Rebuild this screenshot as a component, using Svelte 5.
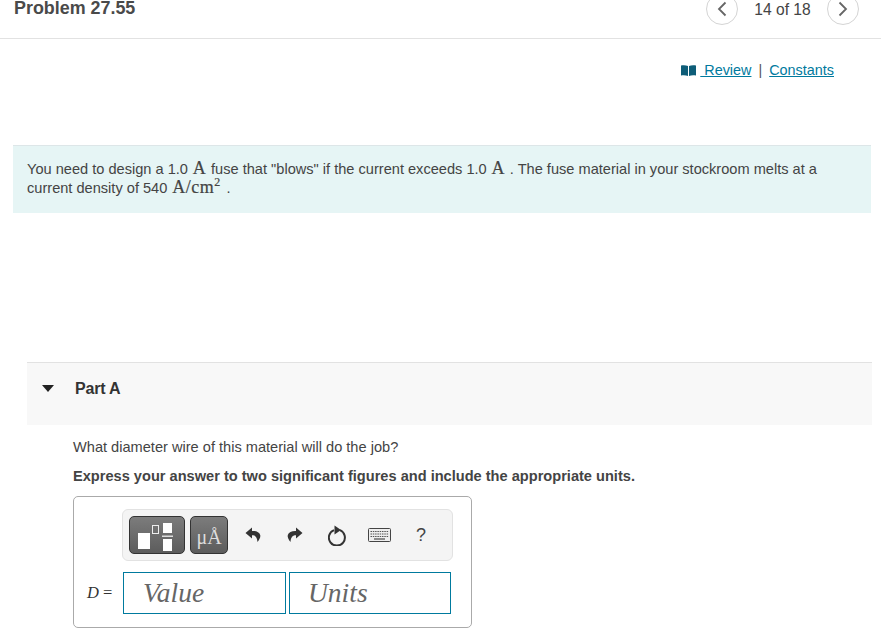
<script>
  const title = 'Problem 27.55';
</script>

<div class="page">
  <header class="head">
    <h1>{title}</h1>
    <nav class="pager">
      <button class="circle" aria-label="Previous">
        <svg width="12" height="16" viewBox="0 0 12 16"><path d="M9.5 1.5 3 8l6.5 6.5" fill="none" stroke="#666" stroke-width="1.8"/></svg>
      </button>
      <span class="count">14 of 18</span>
      <button class="circle" aria-label="Next">
        <svg width="12" height="16" viewBox="0 0 12 16"><path d="M2.5 1.5 9 8l-6.5 6.5" fill="none" stroke="#666" stroke-width="1.8"/></svg>
      </button>
    </nav>
  </header>

  <div class="links">
    <svg class="book" width="15" height="11" viewBox="0 0 15 11"><path d="M0 .5C2 0 5 0 7 1v10C5 10 2 10 0 10.500zM15 .5C13 0 10 0 8 1v10c2-1 5-1 7-.5z" fill="#0e5d78"/></svg>
    <a href="#r" class="link">&nbsp;Review</a>
    <span class="sep">|</span>
    <a href="#c" class="link">Constants</a>
  </div>

  <section class="statement">
    <p>You need to design a 1.0 <span class="m">A</span> fuse that "blows" if the current exceeds 1.0 <span class="m">A</span> . The fuse material in your stockroom melts at a current density of 540 <span class="m">A/cm<sup>2</sup></span> .</p>
  </section>

  <section class="part">
    <svg class="caret" width="12" height="7" viewBox="0 0 12 7"><path d="M0 0h12L6 7z" fill="#222"/></svg>
    <h2>Part A</h2>
  </section>

  <section class="body">
    <p class="q">What diameter wire of this material will do the job?</p>
    <p class="inst">Express your answer to two significant figures and include the appropriate units.</p>

    <div class="answer">
      <div class="toolbar">
        <button class="tpl wide" aria-label="Templates">
          <svg width="54" height="36" viewBox="1 1 54 36">
            <rect x="9" y="17" width="12" height="16" fill="#fff"/>
            <rect x="23.500" y="9.500" width="6" height="8" fill="none" stroke="#eee" stroke-width="1"/>
            <rect x="34" y="7" width="9" height="10" fill="#fff"/>
            <rect x="33" y="19.500" width="11" height="1.500" fill="#ddd"/>
            <rect x="34" y="23" width="9" height="12" fill="#fff"/>
          </svg>
        </button>
        <button class="tpl unit">μÅ</button>
        <span class="ico" aria-label="Undo">
          <svg width="16" height="16" viewBox="0 0 16 16"><path d="M7 .5 .5 6 7 11.500V8.300c3 0 5 1.200 5.500 6.700 2-2.500 3.300-5 2.700-7C14.300 5 11 3.800 7 4z" fill="#333"/></svg>
        </span>
        <span class="ico" aria-label="Redo">
          <svg width="16" height="16" viewBox="0 0 16 16"><path d="M9 .5 15.500 6 9 11.500V8.300c-3 0-5 1.200-5.500 6.700C1.500 12.500.2 10 .8 8 1.700 5 5 3.800 9 4z" fill="#333"/></svg>
        </span>
        <span class="ico" aria-label="Reset">
          <svg width="19" height="21" viewBox="0 0 19 21"><path d="M12 5.200A8 8 0 1 1 6 5.100" fill="none" stroke="#333" stroke-width="2"/><path d="M6.500 .5 13 5 6.500 9.500z" fill="#333"/></svg>
        </span>
        <span class="ico" aria-label="Keyboard">
          <svg width="23" height="14" viewBox="0 0 23 14"><rect x=".5" y=".5" width="22" height="13" rx="1" fill="#eee" stroke="#444"/><path d="M2.500 3.500h18M2.500 6h18M2.500 8.500h18" stroke="#555" stroke-width="1.200" stroke-dasharray="1.500 .8"/><path d="M6 11h11" stroke="#555" stroke-width="1.300"/></svg>
        </span>
        <span class="ico help">?</span>
      </div>
      <div class="row">
        <span class="label"><i>D</i> =</span>
        <input class="val" placeholder="Value" aria-label="Value" />
        <input class="uni" placeholder="Units" aria-label="Units" />
      </div>
    </div>
  </section>
</div>

<style>
  :global(body) { margin: 0; background: #fff; }
  .page {
    width: 881px; height: 633px; overflow: hidden;
    font-family: "Liberation Sans", Arial, sans-serif; color: #333; font-size: 14.6px;
  }
  p, h1, h2 { margin: 0; }
  button { font: inherit; padding: 0; background: none; border: 0; }

  .head {
    height: 38px; border-bottom: 1px solid #e2e2e2;
    display: flex; justify-content: space-between; align-items: flex-start;
    padding: 0 22px 0 14px;
  }
  h1 { font-size: 17.9px; font-weight: 700; color: #4a4a4a; line-height: 16px; }
  .pager { display: flex; align-items: center; margin-top: -9px; }
  .circle {
    width: 32px; height: 32px; border-radius: 50%; border: 1px solid #d4d4d4; background: #fff;
    display: flex; align-items: center; justify-content: center;
  }
  .count { font-size: 15.600px; color: #444; width: 89px; text-align: center; line-height: 32px; margin-top: 3px; }

  .links {
    display: flex; justify-content: flex-end; align-items: center;
    padding: 21px 47px 0 0; height: 20px; line-height: 20px; font-size: 14.400px;
  }
  .link { color: #007a9e; text-decoration: underline; }
  .book { margin-right: 4px; }
  .sep { color: #555; margin: 0 7px; }

  .statement {
    margin: 65px 10px 0 13px; height: 68px; box-sizing: border-box;
    background: #e6f5f5; border-top: 1px solid #dde6e8;
    padding: 14px 14px 0 14px; line-height: 19px; color: #444;
  }
  .m { font-family: "Liberation Serif", serif; font-size: 18px; line-height: 0; letter-spacing: .5px; padding: 0 .75px; -webkit-text-stroke: .2px #444; }
  sup { font-size: 12px; line-height: 0; margin-right: 1px; }

  .part {
    margin: 149px 9px 0 27px; height: 63px; box-sizing: border-box;
    background: #f8f8f8; border-top: 1px solid #e2e2e2;
    display: flex; align-items: flex-start; padding: 16px 0 0 15px;
  }
  .caret { margin-top: 6px; }
  h2 { font-size: 16px; font-weight: 700; color: #333; margin-left: 21px; line-height: 19px; letter-spacing: -.2px; }

  .body { margin: 0 0 0 73px; }
  .q { margin-top: 12px; line-height: 20px; color: #444; }
  .inst { margin-top: 9px; line-height: 20px; font-weight: 700; color: #444; }

  .answer {
    width: 399px; height: 132px; box-sizing: border-box; margin-top: 10px;
    border: 1px solid #aaa; border-radius: 5px; background: #fff;
    padding: 12px 18px 0 48px;
  }
  .toolbar {
    height: 52px; box-sizing: border-box; background: #f4f4f4;
    border: 1px solid #e2e2e2; border-radius: 6px;
    display: flex; align-items: center; padding: 0 5px 0 6px;
  }
  .tpl {
    height: 38px; box-sizing: border-box; border: 1px solid #333; border-radius: 5px;
    background: linear-gradient(#7c7c7c, #5c5c5c); color: #fff;
    display: flex; align-items: center; justify-content: center;
  }
  .wide { width: 56px; }
  .unit { width: 38px; margin: 0 4px 0 5px; font-family: "Liberation Serif", serif; font-size: 20px; padding-top: 5px; color: #ddd; }
  .ico { display: flex; align-items: center; justify-content: center; width: 42px; height: 24px; flex: none; color: #444; }
  .help { font-size: 18px; }

  .row { display: flex; align-items: center; margin: 11px 0 0 -48px; padding-left: 13px; }
  .label { width: 36px; font-family: "Liberation Serif", serif; font-size: 16.500px; color: #333; white-space: nowrap; }
  input {
    width: 163px; height: 42px; box-sizing: border-box; border: 1px solid #007a9e; border-radius: 0;
    padding: 0 0 0 19px; margin: 0 3px 0 0; outline: 0; background: #fff;
    font-family: "Liberation Serif", serif; font-style: italic; font-size: 27.500px;
  }
  .uni { width: 162px; margin: 0; padding-left: 18px; }
  input::placeholder { color: #666; opacity: 1; }
</style>
